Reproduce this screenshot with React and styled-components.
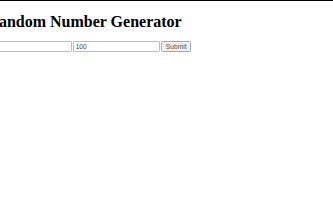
import React from 'react'
import styled, { createGlobalStyle } from 'styled-components'

const GlobalStyle = createGlobalStyle`
  html, body {
    margin: 0;
    padding: 0;
    background: #ffffff;
    overflow: hidden;
  }
  body {
    border-top: 1px solid #000000;
    font-family: "Liberation Serif", "Times New Roman", serif;
  }
`

const Page = styled.div`
  width: 176px;
  display: flex;
  flex-direction: column;
  align-items: center;
`

const Title = styled.h1`
  margin: 11.7px 7px 10.7px 0;
  font-family: "Liberation Serif", "Times New Roman", serif;
  font-size: 16px;
  font-weight: bold;
  line-height: normal;
  color: #000000;
  white-space: nowrap;
  flex-shrink: 0;
`

const Form = styled.form`
  display: flex;
  align-items: center;
  gap: 1.6px;
  flex-shrink: 0;
  white-space: nowrap;
`

const NumberInput = styled.input`
  box-sizing: border-box;
  width: 86.6px;
  height: 11px;
  margin: 0;
  padding: 0 1.5px;
  border: 1px solid #bdbdbd;
  border-radius: 1px;
  background: #ffffff;
  font-family: "Liberation Sans", Arial, sans-serif;
  font-size: 6.67px;
  color: #444444;
  outline: none;
`

const SubmitButton = styled.button`
  appearance: none;
  box-sizing: border-box;
  height: 11px;
  margin: 0;
  padding: 0 3.5px;
  border: 1px solid #a8a8a8;
  border-radius: 1.5px;
  background: #efefef;
  font-family: "Liberation Sans", Arial, sans-serif;
  font-size: 6.67px;
  color: #555555;
  line-height: 1;
`

export default function App() {
  return (
    <>
      <GlobalStyle />
      <Page>
        <Title>Random Number Generator</Title>
        <Form onSubmit={e => e.preventDefault()}>
          <NumberInput type="text" defaultValue="" />
          <NumberInput type="text" defaultValue="100" />
          <SubmitButton type="submit">Submit</SubmitButton>
        </Form>
      </Page>
    </>
  )
}
